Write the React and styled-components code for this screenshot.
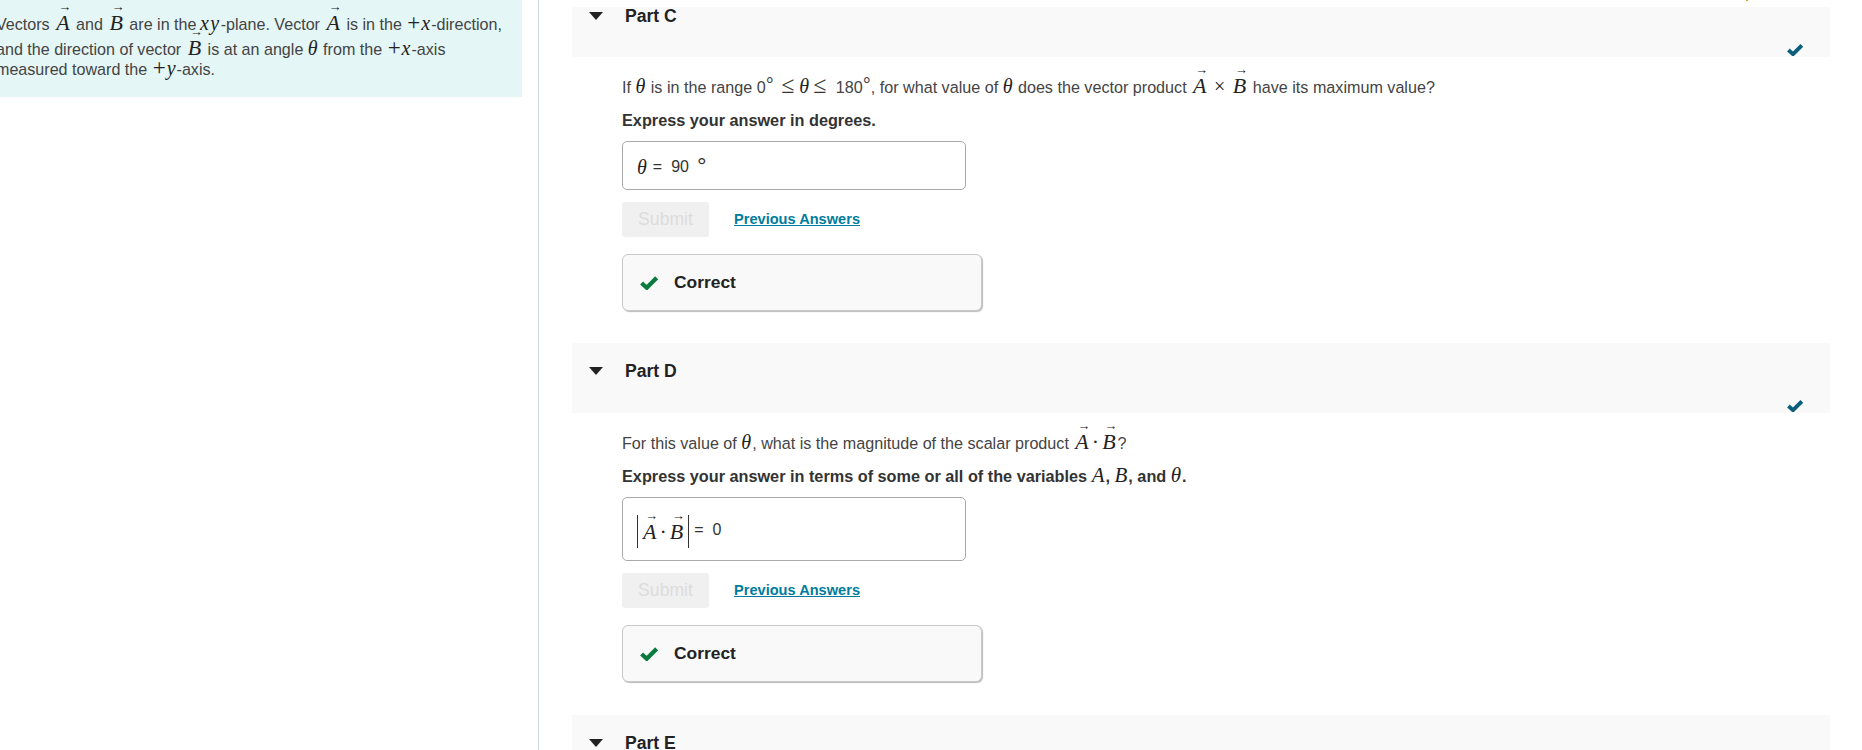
import React from "react";
import styled, { createGlobalStyle } from "styled-components";

const GlobalStyle = createGlobalStyle`
  html, body {
    margin: 0;
    padding: 0;
    background: #fff;
    color: #333;
    font-family: "Liberation Sans", Arial, sans-serif;
  }
`;

function CheckMark({ color, width, height }) {
  return (
    <svg width={width} height={height} viewBox="0 0 16 12">
      <polyline points="1.4,6 6,10.2 14.8,1.4" fill="none" stroke={color} strokeWidth="3.8" />
    </svg>
  );
}

function Vec({ children }) {
  return <VecWrap>{children}</VecWrap>;
}

export default function App() {
  return (
    <Page>
      <GlobalStyle />
      <LeftPane>
        <Intro>
          <IntroLine $height={26}>
            Vectors <Vec>A</Vec> and <Vec>B</Vec> are in the <Plane>xy</Plane>-plane. Vector <Vec>A</Vec> is in the <Up $size={23}>+</Up><M>x</M>-direction,
          </IntroLine>
          <IntroLine $height={25}>
            and the direction of vector <Vec>B</Vec> is at an angle <M>θ</M> from the <Up $size={23}>+</Up><M>x</M>-axis
          </IntroLine>
          <IntroLine $height={14}>
            measured toward the <Up $size={23}>+</Up><M>y</M>-axis.
          </IntroLine>
        </Intro>
      </LeftPane>

      <RightPane>
        <TopDot />
        <PartHeader $height={50} $top={0} $pad={1}>
          <Arrow />
          <PartTitle>Part C</PartTitle>
          <HeaderCheck>
            <CheckMark color="#0b5f7c" width={16} height={12} />
          </HeaderCheck>
        </PartHeader>
        <PartBody>
          <Question>
            If <M>θ</M> is in the range 0<Sup>°</Sup> <Rel>≤</Rel><M>θ</M><Rel>≤</Rel> 180<Sup>°</Sup>, for what value of <M>θ</M> does the vector product <Vec>A</Vec> <Up $size={20}>×</Up> <Vec>B</Vec> have its maximum value?
          </Question>
          <Instruction>Express your answer in degrees.</Instruction>
          <AnswerBox $height={49}>
            <M>θ</M> <Eq>=</Eq> 90 <Degree>°</Degree>
          </AnswerBox>
          <Actions>
            <Submit disabled>Submit</Submit>
            <Previous href="#">Previous Answers</Previous>
          </Actions>
          <Feedback>
            <CheckMark color="#0a7a3e" width={18} height={14} />
            Correct
          </Feedback>
        </PartBody>

        <PartHeader $height={70} $top={32} $pad={20}>
          <Arrow />
          <PartTitle>Part D</PartTitle>
          <HeaderCheck>
            <CheckMark color="#0b5f7c" width={16} height={12} />
          </HeaderCheck>
        </PartHeader>
        <PartBody>
          <Question>
            For this value of <M>θ</M>, what is the magnitude of the scalar product <Vec>A</Vec><Up $size={22}>·</Up><Vec>B</Vec>?
          </Question>
          <Instruction>
            Express your answer in terms of some or all of the variables <BoldM>A</BoldM>, <BoldM>B</BoldM>, and <BoldM>θ</BoldM>.
          </Instruction>
          <AnswerBox $height={64}>
            <Bar>
              <Vec>A</Vec><Up $size={22}>·</Up><Vec>B</Vec>
            </Bar>
            <Eq>=</Eq> 0
          </AnswerBox>
          <Actions>
            <Submit disabled>Submit</Submit>
            <Previous href="#">Previous Answers</Previous>
          </Actions>
          <Feedback>
            <CheckMark color="#0a7a3e" width={18} height={14} />
            Correct
          </Feedback>
        </PartBody>

        <PartHeader $height={60} $top={33} $pad={20}>
          <Arrow />
          <PartTitle>Part E</PartTitle>
        </PartHeader>
      </RightPane>
    </Page>
  );
}

const Page = styled.div`
  display: flex;
  width: 1862px;
  height: 750px;
  overflow: hidden;
`;

const LeftPane = styled.div`
  width: 538px;
  flex-shrink: 0;
  border-right: 1px solid #d3d9e0;
`;

const Intro = styled.div`
  width: 522px;
  height: 97px;
  box-sizing: border-box;
  padding-top: 11px;
  background: #e4f6f6;
  font-size: 16.1px;
  color: #444;
  overflow: hidden;
`;

// the first letters run off the left edge in the original
const IntroLine = styled.div`
  height: ${(p) => p.$height}px;
  line-height: ${(p) => p.$height}px;
  margin-left: -4px;
  white-space: nowrap;
`;

const RightPane = styled.div`
  position: relative;
  flex: 1;
  padding: 7px 32px 0 33px;
`;

const TopDot = styled.div`
  position: absolute;
  left: 1207px;
  top: 0;
  width: 2px;
  height: 1px;
  background: #e89a1c;
`;

const PartHeader = styled.div`
  display: flex;
  height: ${(p) => p.$height}px;
  margin-top: ${(p) => p.$top}px;
  padding: ${(p) => p.$pad}px 27px 0 17px;
  box-sizing: border-box;
  background: #f9f9f9;
`;

const Arrow = styled.span`
  width: 0;
  height: 0;
  margin-top: 4px;
  border-left: 7px solid transparent;
  border-right: 7px solid transparent;
  border-top: 8px solid #222;
`;

const PartTitle = styled.h3`
  margin: 0 0 0 22px;
  font-size: 17.6px;
  line-height: 17px;
  font-weight: 700;
  color: #222;
`;

const HeaderCheck = styled.span`
  margin-left: auto;
  align-self: flex-end;
  height: 12px;
  margin-bottom: 1px;
  line-height: 0;
`;

const PartBody = styled.div`
  padding: 17px 0 0 50px;
`;

const M = styled.i`
  font-family: "Liberation Serif", serif;
  font-size: 20px;
  line-height: 0;
  letter-spacing: 1px;
  color: #222;
`;

const Plane = styled(M)`
  margin-left: -1px;
  letter-spacing: 1.5px;
`;

const BoldM = styled(M)`
  font-weight: 400;
  font-size: 21px;
`;

const Up = styled.span`
  font-family: "Liberation Serif", serif;
  font-size: ${(p) => p.$size}px;
  line-height: 0;
  margin: 0 1px;
  color: #222;
`;

const Rel = styled.span`
  font-family: "Liberation Serif", serif;
  font-size: 24px;
  line-height: 0;
  margin: 0 5px 0 3px;
  color: #333;
`;

const Sup = styled.span`
  font-size: 20px;
  line-height: 0;
  position: relative;
  top: -1px;
`;

const VecWrap = styled.span`
  position: relative;
  display: inline-block;
  padding: 0 2px;
  font-family: "Liberation Serif", serif;
  font-style: italic;
  font-size: 22px;
  line-height: 1;
  color: #222;
  &::before {
    content: "→";
    position: absolute;
    left: 4px;
    top: -12px;
    font-size: 13px;
    font-style: normal;
  }
`;

const Question = styled.p`
  margin: 0;
  height: 26px;
  line-height: 26px;
  font-size: 16.15px;
  color: #444;
  white-space: nowrap;
`;

const Instruction = styled.p`
  margin: 7px 0 0;
  height: 26px;
  line-height: 26px;
  font-size: 16.25px;
  font-weight: 700;
  color: #333;
  white-space: nowrap;
`;

const AnswerBox = styled.div`
  display: flex;
  align-items: center;
  gap: 5px;
  box-sizing: border-box;
  width: 344px;
  height: ${(p) => p.$height}px;
  margin-top: 8px;
  padding: 2px 0 0 14px;
  border: 1px solid #aaa;
  border-radius: 5px;
  font-size: 16px;
  color: #333;
`;

const Eq = styled.span`
  margin-right: 4px;
`;

const Degree = styled.span`
  margin-left: 3px;
  align-self: flex-start;
  margin-top: 10px;
  font-size: 24px;
  line-height: 24px;
`;

const Bar = styled.span`
  margin-top: 2px;
  padding: 6px 3px 5px;
  border-left: 1px solid #333;
  border-right: 1px solid #333;
`;

const Actions = styled.div`
  display: flex;
  align-items: center;
  gap: 25px;
  margin-top: 12px;
`;

const Submit = styled.button`
  width: 87px;
  height: 35px;
  border: none;
  border-radius: 3px;
  background: #f0f0f0;
  color: #dcdcdc;
  font-family: inherit;
  font-size: 17.6px;
  padding: 0;
`;

const Previous = styled.a`
  margin-bottom: 2px;
  color: #007c9e;
  font-size: 14.6px;
  font-weight: 700;
`;

const Feedback = styled.div`
  display: flex;
  align-items: center;
  gap: 16px;
  box-sizing: border-box;
  width: 360px;
  height: 57px;
  margin-top: 17px;
  padding-left: 17px;
  background: #f9f9f9;
  border: 1px solid #c8c8c8;
  border-radius: 6px;
  box-shadow: 1px 1px 1px #bbb;
  font-size: 17.4px;
  font-weight: 700;
  color: #222;
`;
